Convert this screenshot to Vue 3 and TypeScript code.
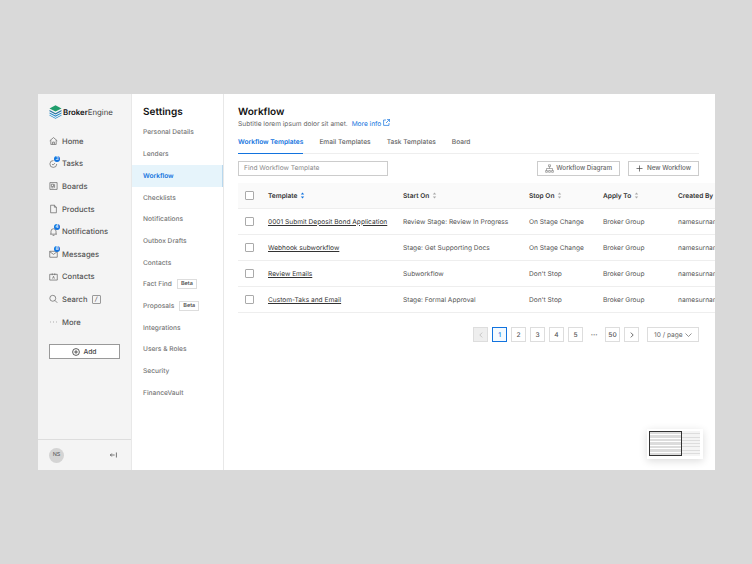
<template>
  <div class="page">
    <div class="app">
      <aside class="sidebar">
        <div class="logo">
          <svg width="13" height="14" viewBox="0 0 13 14">
            <path d="M6.5 0.3 12.5 3.4 6.5 6.6 0.5 3.4Z" fill="#1f9d6b" />
            <path d="M0.5 5 6.5 8.2 12.5 5V6.2L6.5 9.4 0.5 6.2Z" fill="#1f6f9d" />
            <path d="M0.5 7.4 6.5 10.6 12.5 7.4V8.6L6.5 11.8 0.5 8.6Z" fill="#1b87c9" />
            <path d="M0.5 9.8 6.5 13 12.5 9.8V10.6L6.5 13.8 0.5 10.6Z" fill="#1b87c9" />
          </svg>
          <span class="logo-text"><b>Broker</b>Engine</span>
        </div>
        <nav class="nav">
          <div v-for="item in navItems" :key="item.label" class="nav-item">
            <span class="nav-icon">
              <svg width="10" height="10" viewBox="0 0 10 10" fill="none" stroke="#666" stroke-width="0.8">
                <path :d="item.icon" />
              </svg>
              <span v-if="item.badge" class="badge">{{ item.badge }}</span>
            </span>
            <span>{{ item.label }}</span>
            <span v-if="item.label === 'Search'" class="slash">/</span>
          </div>
        </nav>
        <button class="add-btn">
          <svg width="8" height="8" viewBox="0 0 8 8" fill="none" stroke="#333" stroke-width="0.8">
            <circle cx="4" cy="4" r="3.4" />
            <path d="M4 2.2V5.8M2.2 4H5.8" />
          </svg>
          Add
        </button>
        <div class="side-foot">
          <span class="avatar">NS</span>
          <svg width="7" height="6" viewBox="0 0 7 6" fill="none" stroke="#555" stroke-width="0.8">
            <path d="M0.3 3H4.6M1.8 1.5 0.3 3 1.8 4.5M6.4 0.5V5.5" />
          </svg>
        </div>
      </aside>

      <section class="settings">
        <h2 class="settings-title">Settings</h2>
        <div
          v-for="s in settingsItems"
          :key="s.label"
          class="settings-item"
          :class="{ active: s.label === 'Workflow' }"
        >
          {{ s.label }}
          <span v-if="s.beta" class="beta">Beta</span>
        </div>
      </section>

      <main class="main">
        <h1 class="title">Workflow</h1>
        <p class="subtitle">
          Subtitle lorem ipsum dolor sit amet.
          <a class="more">More info
            <svg width="7" height="7" viewBox="0 0 7 7" fill="none" stroke="#1273de" stroke-width="0.7">
              <path d="M3 1H0.6V6.4H6V4M4 0.4H6.6V3M6.6 0.4 3 4" />
            </svg>
          </a>
        </p>
        <div class="tabs">
          <span v-for="(t, i) in tabs" :key="t" class="tab" :class="{ current: i === 0 }">{{ t }}</span>
        </div>
        <div class="toolbar">
          <div class="search">Find Workflow Template</div>
          <div class="actions">
            <button class="btn diagram">
              <svg width="9" height="9" viewBox="0 0 9 9" fill="none" stroke="#777" stroke-width="0.6">
                <path d="M3.5 0.8H5.5V2.6H3.5ZM4.5 2.6V4.5M1.5 6.5V4.5H7.5V6.5M0.6 6.5H2.4V8.3H0.6ZM3.6 6.5H5.4V8.3H3.6ZM6.6 6.5H8.4V8.3H6.6Z" />
              </svg>
              Workflow Diagram
            </button>
            <button class="btn create">
              <svg width="7" height="7" viewBox="0 0 7 7" fill="none" stroke="#444" stroke-width="0.7">
                <path d="M3.5 0.5V6.5M0.5 3.5H6.5" />
              </svg>
              New Workflow
            </button>
          </div>
        </div>

        <div class="table-wrap">
          <div class="row head">
            <span class="check"></span>
            <span v-for="(h, i) in headers" :key="h" class="th">
              {{ h }}
              <svg v-if="i < 4" width="5" height="7" viewBox="0 0 5 7">
                <path d="M2.5 0.6 4.2 2.6H0.8Z" :fill="i === 0 ? '#1273de' : '#aaa'" />
                <path d="M2.5 6.4 4.2 4.4H0.8Z" :fill="i === 0 ? '#1273de' : '#aaa'" />
              </svg>
            </span>
          </div>
          <div v-for="r in rows" :key="r.name" class="row">
            <span class="check"></span>
            <a class="link">{{ r.name }}</a>
            <span>{{ r.start }}</span>
            <span>{{ r.stop }}</span>
            <span>Broker Group</span>
            <span>namesurname</span>
          </div>
        </div>

        <div class="pager">
          <span class="pg disabled">
            <svg width="4" height="6" viewBox="0 0 4 6" fill="none" stroke="#bbb" stroke-width="0.8"><path d="M3.2 0.6 0.8 3 3.2 5.4" /></svg>
          </span>
          <span class="pg selected">1</span>
          <span class="pg">2</span>
          <span class="pg">3</span>
          <span class="pg">4</span>
          <span class="pg">5</span>
          <span class="dots">•••</span>
          <span class="pg">50</span>
          <span class="pg">
            <svg width="4" height="6" viewBox="0 0 4 6" fill="none" stroke="#444" stroke-width="0.8"><path d="M0.8 0.6 3.2 3 0.8 5.4" /></svg>
          </span>
          <span class="per-page">
            10 / page
            <svg width="7" height="4" viewBox="0 0 7 4" fill="none" stroke="#666" stroke-width="0.7"><path d="M0.5 0.5 3.5 3.5 6.5 0.5" /></svg>
          </span>
        </div>

        <div class="minimap">
          <div class="mini-view"><i v-for="n in 6" :key="n"></i></div>
          <div class="mini-rest"><i v-for="n in 7" :key="n"></i></div>
        </div>
      </main>
    </div>
  </div>
</template>

<script setup lang="ts">
interface NavItem {
  label: string;
  icon: string;
  badge?: number;
}

const navItems: NavItem[] = [
  { label: 'Home', icon: 'M0.8 4.8 5 1.2 9.2 4.8M2 4V8.8H8V4M4 8.8V6.2H6V8.8' },
  { label: 'Tasks', icon: 'M8.6 5A3.8 3.8 0 1 1 5 1.2M3.4 5 4.6 6.2 6.6 4', badge: 3 },
  { label: 'Boards', icon: 'M1 1.2H9V8.8H1ZM2.6 3H5V5.6H2.6ZM6.2 3V7M2.6 7H5' },
  { label: 'Products', icon: 'M1.8 0.8H6L8.2 3V9.2H1.8ZM6 0.8V3H8.2' },
  { label: 'Notifications', icon: 'M2.2 7.4V4.2A2.8 2.8 0 0 1 7.8 4.2V7.4M1.2 7.4H8.8M4 8.8H6', badge: 4 },
  { label: 'Messages', icon: 'M0.8 2H9.2V8.6H0.8ZM0.8 2.4 5 5.4 9.2 2.4', badge: 8 },
  { label: 'Contacts', icon: 'M0.8 2H9.2V8.4H0.8ZM3.6 1V3M6.4 1V3M4 6.8 5 4.2 6 6.8' },
  { label: 'Search', icon: 'M4.2 0.9A3.3 3.3 0 1 0 4.2 7.5 3.3 3.3 0 1 0 4.2 0.9ZM6.6 6.6 9.2 9.2' },
  { label: 'More', icon: 'M1.2 5H1.9M4.6 5H5.4M8.1 5H8.8' },
];

const settingsItems = [
  { label: 'Personal Details' },
  { label: 'Lenders' },
  { label: 'Workflow' },
  { label: 'Checklists' },
  { label: 'Notifications' },
  { label: 'Outbox Drafts' },
  { label: 'Contacts' },
  { label: 'Fact Find', beta: true },
  { label: 'Proposals', beta: true },
  { label: 'Integrations' },
  { label: 'Users & Roles' },
  { label: 'Security' },
  { label: 'FinanceVault' },
];

const tabs = ['Workflow Templates', 'Email Templates', 'Task Templates', 'Board'];
const headers = ['Template', 'Start On', 'Stop On', 'Apply To', 'Created By'];

const rows = [
  { name: '0001 Submit Deposit Bond Application', start: 'Review Stage: Review In Progress', stop: 'On Stage Change' },
  { name: 'Webhook subworkflow', start: 'Stage: Get Supporting Docs', stop: 'On Stage Change' },
  { name: 'Review Emails', start: 'Subworkflow', stop: "Don't Stop" },
  { name: 'Custom-Taks and Email', start: 'Stage: Formal Approval', stop: "Don't Stop" },
];
</script>

<style>
html,
body {
  margin: 0;
  background: #d9d9d9;
}
</style>

<style scoped>
.page {
  width: 752px;
  height: 564px;
  box-sizing: border-box;
  padding-left: 38px;
  display: flex;
  align-items: center;
  font-family: Inter, "Liberation Sans", sans-serif;
  text-rendering: geometricPrecision;
  color: #333;
}

.app {
  width: 677px;
  height: 376px;
  background: #fff;
  display: flex;
  overflow: hidden;
  transform: translateZ(0);
}

.sidebar {
  width: 93px;
  flex: none;
  background: #f4f4f4;
  border-right: 1px solid #e8e8e8;
  display: flex;
  flex-direction: column;
}

.logo {
  display: flex;
  align-items: center;
  gap: 1px;
  padding: 11px 0 0 11px;
  height: 14px;
}

.logo-text {
  font-size: 7.8px;
  color: #444;
}

.logo-text b {
  font-weight: 600;
  color: #111;
}

.nav {
  margin-top: 11px;
  display: flex;
  flex-direction: column;
}

.nav-item {
  height: 22.6px;
  display: flex;
  align-items: center;
  gap: 4px;
  padding-left: 11px;
  font-size: 7.6px;
  font-weight: 500;
  color: #555;
}

.nav-icon {
  position: relative;
  width: 9px;
  height: 10px;
  margin-right: 0;
  display: flex;
}

.badge {
  position: absolute;
  top: -3px;
  left: 5px;
  width: 6px;
  height: 6px;
  border-radius: 50%;
  background: #1273de;
  color: #fff;
  font-size: 5px;
  line-height: 6px;
  text-align: center;
}

.slash {
  width: 7px;
  height: 7px;
  border: 1px solid #999;
  border-radius: 1px;
  font-size: 6px;
  line-height: 7px;
  text-align: center;
  font-style: italic;
}

.add-btn {
  margin: 11px 0 0 11px;
  width: 71px;
  height: 15px;
  border: 1px solid #999;
  background: #fff;
  font: 500 6.8px Inter, "Liberation Sans", sans-serif;
  color: #444;
  display: flex;
  align-items: center;
  justify-content: center;
  gap: 3px;
  padding: 0;
}

.side-foot {
  margin-top: auto;
  height: 30px;
  border-top: 1px solid #ddd;
  display: flex;
  align-items: center;
  justify-content: space-between;
  padding: 0 14px 0 11px;
}

.avatar {
  width: 15px;
  height: 15px;
  border-radius: 50%;
  background: #d4d4d4;
  font-size: 5.5px;
  line-height: 15px;
  text-align: center;
  color: #555;
}

.settings {
  width: 91px;
  flex: none;
  border-right: 1px solid #e8e8e8;
}

.settings-title {
  margin: 12px 0 3.6px 11px;
  font-size: 10px;
  line-height: 12px;
  font-weight: 600;
  color: #111;
}

.settings-item {
  height: 21.7px;
  display: flex;
  align-items: center;
  gap: 5px;
  padding-left: 11px;
  font-size: 6.6px;
  font-weight: 500;
  color: #777;
}

.settings-item.active {
  background: #e6f4fb;
  color: #1273de;
  box-shadow: inset -1px 0 0 #b8d8ee;
  font-weight: 600;
}

.beta {
  border: 1px solid #ddd;
  padding: 1px 3px;
  font-size: 5.6px;
  color: #444;
}

.main {
  position: relative;
  flex: 1;
  min-width: 0;
  padding: 12px 0 0 14px;
  overflow: hidden;
}

.title {
  margin: 0;
  font-size: 10px;
  line-height: 12px;
  font-weight: 600;
  color: #111;
}

.subtitle {
  margin: 1px 0 0;
  font-size: 6.6px;
  line-height: 10px;
  color: #666;
}

.more {
  margin-left: 2px;
  color: #1273de;
}

.tabs {
  margin: 7px 16px 0 0;
  height: 17px;
  display: flex;
  gap: 16px;
  border-bottom: 1px solid #eee;
}

.tab {
  font-size: 6.6px;
  font-weight: 500;
  line-height: 10px;
  color: #666;
  padding-top: 1px;
}

.tab.current {
  color: #1273de;
  font-weight: 600;
  height: 16px;
  border-bottom: 1px solid #1273de;
}

.toolbar {
  margin: 6.5px 16px 0 0;
  display: flex;
  justify-content: space-between;
}

.search {
  width: 150px;
  height: 15px;
  border: 1px solid #ccc;
  box-sizing: border-box;
  font-size: 6.6px;
  line-height: 13px;
  padding-left: 5px;
  color: #888;
}

.actions {
  display: flex;
  gap: 8px;
}

.btn {
  height: 15px;
  border: 1px solid #ccc;
  background: #fff;
  padding: 0 7px;
  display: flex;
  align-items: center;
  font: 500 6.3px Inter, "Liberation Sans", sans-serif;
  color: #666;
}

.btn.diagram {
  gap: 2px;
}

.btn.create {
  gap: 4px;
}

.table-wrap {
  margin-top: 7.5px;
  width: 520px;
}

.row {
  height: 26px;
  box-sizing: border-box;
  display: grid;
  grid-template-columns: 30px 135px 126px 74px 75px 80px;
  align-items: center;
  font-size: 6.6px;
  color: #555;
  border-bottom: 1px solid #eee;
  white-space: nowrap;
}

.row.head {
  background: #fafafa;
  font-weight: 600;
  color: #333;
}

.th {
  display: flex;
  align-items: center;
  gap: 3px;
}

.check {
  width: 7px;
  height: 7px;
  margin-left: 7px;
  border: 1px solid #aaa;
  border-radius: 1px;
  background: #fff;
}

.link {
  color: #333;
  text-decoration: underline;
  text-decoration-thickness: 0.5px;
  text-underline-offset: 1px;
}

.pager {
  margin: 14px 16px 0 0;
  display: flex;
  justify-content: flex-end;
  align-items: center;
  gap: 4px;
}

.pg {
  width: 15px;
  height: 15px;
  box-sizing: border-box;
  border: 1px solid #ddd;
  display: flex;
  align-items: center;
  justify-content: center;
  font-size: 6.6px;
  font-weight: 500;
  color: #555;
}

.pg.disabled {
  background: #eee;
}

.pg.selected {
  border-color: #1273de;
  color: #1273de;
  background: #f4faff;
}

.dots {
  width: 14px;
  text-align: center;
  font-size: 4px;
  color: #666;
}

.per-page {
  margin-left: 4px;
  width: 52px;
  height: 15px;
  box-sizing: border-box;
  border: 1px solid #ddd;
  display: flex;
  align-items: center;
  justify-content: space-between;
  padding: 0 6px;
  font-size: 6.6px;
  color: #666;
}

.minimap {
  position: absolute;
  right: 12px;
  bottom: 11px;
  width: 56px;
  height: 30px;
  padding: 2px 3px 3px 2px;
  box-sizing: border-box;
  background: #fff;
  box-shadow: 0 2px 8px rgba(0, 0, 0, 0.14);
  display: flex;
}

.mini-view,
.mini-rest {
  display: flex;
  flex-direction: column;
  justify-content: space-evenly;
}

.mini-view {
  width: 33px;
  box-sizing: border-box;
  border: 1px solid #333;
  background: #dcdcdc;
}

.mini-rest {
  flex: 1;
  background: #f4f4f4;
}

.minimap i {
  display: block;
  height: 1px;
  background: #fff;
}

.mini-rest i {
  background: #ddd;
}
</style>
